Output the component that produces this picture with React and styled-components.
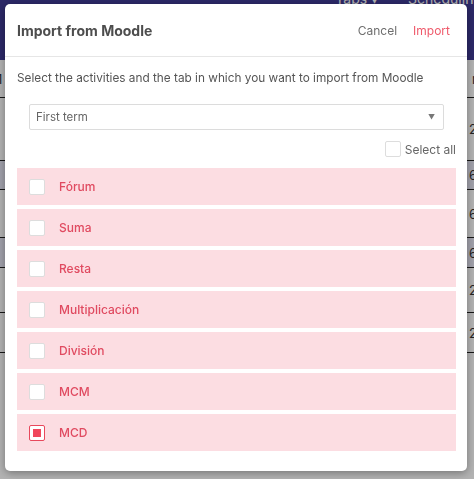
import React, { useState } from 'react'
import styled, { createGlobalStyle } from 'styled-components'

const GlobalStyle = createGlobalStyle`
  html, body {
    margin: 0;
    padding: 0;
    background: #ffffff;
    font-family: Inter, "Noto Sans", sans-serif;
  }
  * { box-sizing: border-box; }
`

const activities = ['Fórum', 'Suma', 'Resta', 'Multiplicación', 'División', 'MCM', 'MCD']

const tableRows = [
  { h: 38, left: '1', right: 'r', shade: false },
  { h: 63, left: '', right: '2', shade: false },
  { h: 29, left: '', right: '6', shade: true },
  { h: 48, left: '', right: '6', shade: false },
  { h: 30, left: '', right: '6', shade: true },
  { h: 45, left: '', right: '2', shade: false },
  { h: 40, left: '', right: '2', shade: false },
]

function Checkbox({ checked, onClick }) {
  return (
    <Box checked={checked} onClick={onClick}>
      {checked && <Dot />}
    </Box>
  )
}

export default function App() {
  const [selected, setSelected] = useState({ MCD: true })
  const allChecked = activities.every(a => selected[a])

  const toggle = name => setSelected(s => ({ ...s, [name]: !s[name] }))
  const toggleAll = () => {
    const next = {}
    activities.forEach(a => { next[a] = !allChecked })
    setSelected(next)
  }

  return (
    <>
      <GlobalStyle />
      <Page>
        <TopBar>
          <Nav>
            <NavItem>Tabs ▾</NavItem>
            <NavItem>Scheduling</NavItem>
          </Nav>
        </TopBar>
        <Table>
          {tableRows.map((r, i) => (
            <TableRow key={i} shade={r.shade} style={{ height: r.h }}>
              <Cell>{r.left}</Cell>
              <Cell>{r.right}</Cell>
            </TableRow>
          ))}
        </Table>
      </Page>

      <Backdrop>
        <Modal>
          <Header>
            <Title>Import from Moodle</Title>
            <Actions>
              <TextButton>Cancel</TextButton>
              <TextButton primary>Import</TextButton>
            </Actions>
          </Header>
          <Body>
            <Description>
              Select the activities and the tab in which you want to import from Moodle
            </Description>
            <Select>
              <span>First term</span>
              <Caret>▼</Caret>
            </Select>
            <SelectAll>
              <Checkbox checked={allChecked} onClick={toggleAll} />
              <span>Select all</span>
            </SelectAll>
            <List>
              {activities.map(a => (
                <Row key={a} onClick={() => toggle(a)}>
                  <Checkbox checked={!!selected[a]} />
                  <RowLabel>{a}</RowLabel>
                </Row>
              ))}
            </List>
          </Body>
        </Modal>
      </Backdrop>
    </>
  )
}

const Page = styled.div`
  min-height: 479px;
  background: #ffffff;
`

const TopBar = styled.div`
  height: 60px;
  background: #3f3a94;
  overflow: hidden;
`

const Nav = styled.div`
  display: flex;
  justify-content: flex-end;
  gap: 30px;
  margin-top: -9px;
  margin-right: -8px;
`

const NavItem = styled.div`
  color: #ffffff;
  font-size: 14px;
  line-height: 16px;
`

const Table = styled.div`
  display: flex;
  flex-direction: column;
`

const TableRow = styled.div`
  display: flex;
  justify-content: space-between;
  align-items: center;
  border-bottom: 1px solid #222;
  background: ${p => (p.shade ? '#e6e6f4' : '#ffffff')};
`

const Cell = styled.div`
  font-size: 13px;
  color: #333;
  margin: 0 -3px;
`

const Backdrop = styled.div`
  position: fixed;
  inset: 0;
  background: rgba(0, 0, 0, 0.3);
  display: flex;
  padding: 4px 7px 8px 5px;
`

const Modal = styled.div`
  flex: 1;
  background: #ffffff;
  border-radius: 5px;
  box-shadow: 0 2px 8px rgba(0, 0, 0, 0.35);
  display: flex;
  flex-direction: column;
`

const Header = styled.div`
  height: 53px;
  display: flex;
  align-items: center;
  justify-content: space-between;
  padding: 0 17px 0 12px;
  border-bottom: 1px solid #e6e6e6;
`

const Title = styled.div`
  font-size: 14px;
  font-weight: 700;
  color: #4d4d4d;
`

const Actions = styled.div`
  display: flex;
  gap: 16px;
`

const TextButton = styled.div`
  font-size: 12px;
  color: ${p => (p.primary ? '#ef5a6b' : '#6e6e6e')};
  cursor: pointer;
`

const Body = styled.div`
  padding: 13px 11px 0 12px;
  display: flex;
  flex-direction: column;
`

const Description = styled.div`
  font-size: 11.8px;
  line-height: 16px;
  color: #555555;
`

const Select = styled.div`
  margin: 18px 12px 0 12px;
  height: 26px;
  border: 1px solid #dcdcdc;
  border-radius: 2px;
  display: flex;
  align-items: center;
  justify-content: space-between;
  padding: 0 8px 0 6px;
  font-size: 11.5px;
  color: #666666;
`

const Caret = styled.span`
  font-size: 7px;
  color: #777;
`

const SelectAll = styled.div`
  margin-top: 11px;
  align-self: flex-end;
  display: flex;
  align-items: center;
  gap: 4px;
  font-size: 12px;
  color: #666666;
`

const List = styled.div`
  margin-top: 11px;
  display: flex;
  flex-direction: column;
  gap: 4px;
`

const Row = styled.div`
  height: 37px;
  background: #fcdde2;
  display: flex;
  align-items: center;
  gap: 14px;
  padding-left: 12px;
  cursor: pointer;
`

const RowLabel = styled.span`
  font-size: 12px;
  font-weight: 500;
  color: #e04a60;
`

const Box = styled.div`
  width: 16px;
  height: 16px;
  background: #ffffff;
  border: 1px solid ${p => (p.checked ? '#e8485c' : '#dddddd')};
  border-radius: 2px;
  display: flex;
  align-items: center;
  justify-content: center;
  flex-shrink: 0;
`

const Dot = styled.div`
  width: 8px;
  height: 8px;
  background: #f0475c;
`
